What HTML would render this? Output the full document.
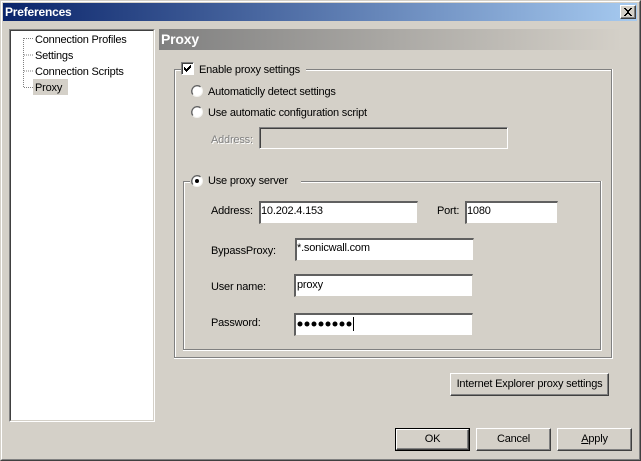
<!DOCTYPE html>
<html><head><meta charset="utf-8"><style>
html,body{margin:0;padding:0;background:#d4d0c8}
#w{position:relative;width:641px;height:461px;overflow:hidden;background:#d4d0c8;font-family:"Liberation Sans",sans-serif;font-size:11px;letter-spacing:-.2px;color:#000}
#w div{position:absolute;box-sizing:border-box}
.t{white-space:nowrap;line-height:14px;height:14px;margin-top:1px}
.b{background:#d4d0c8;border-top:1px solid #fff;border-left:1px solid #fff;border-right:1px solid #404040;border-bottom:1px solid #404040;box-shadow:inset -1px -1px 0 #808080;text-align:center;white-space:nowrap}
.d{background:#808080}.h{background:#fff}
.f{background:#fff;border-top:2px solid #606060;border-left:2px solid #606060;border-right:1px solid #d4d0c8;border-bottom:1px solid #d4d0c8}
</style></head><body><div id="w">
<div style="left:0;top:0;width:641px;height:461px;border-top:1px solid #d4d0c8;border-left:1px solid #d4d0c8;border-right:1px solid #404040;border-bottom:1px solid #404040"></div>
<div style="left:1px;top:1px;width:639px;height:459px;border-top:1px solid #fff;border-left:1px solid #fff;border-right:1px solid #808080;border-bottom:1px solid #808080"></div>
<div style="left:3px;top:3px;width:634px;height:18px;background:linear-gradient(90deg,#0a246a,#a6caf0)"></div>
<div class="t" style="left:5px;top:5px;margin:0;color:#fff;font-weight:bold;font-size:12px;letter-spacing:-.2px">Preferences</div>
<div class="b" style="left:620px;top:5px;width:16px;height:14px"></div>
<svg style="position:absolute;left:620px;top:5px" width="16" height="14"><path d="M4 3h2v1h1v1h2v-1h1v-1h2v1h-1v1h-1v1h-1v2h1v1h1v1h1v1h-2v-1h-1v-1h-2v1h-1v1h-2v-1h1v-1h1v-1h1v-2h-1v-1h-1v-1h-1z" fill="#000"/></svg>

<!-- tree -->
<div style="left:9px;top:29px;width:146px;height:393px;background:#fff;border-top:1px solid #808080;border-left:1px solid #808080;border-right:1px solid #fff;border-bottom:1px solid #fff"></div>
<div style="left:10px;top:30px;width:144px;height:391px;background:#fff;border-top:1px solid #404040;border-left:1px solid #404040;border-right:1px solid #d4d0c8;border-bottom:1px solid #d4d0c8"></div>
<svg style="position:absolute;left:20px;top:35px" width="16" height="56"><path d="M3.5 3V53M4 3.5H14M4 20H14M4 36H14M4 52.5H14" stroke="#808080" stroke-dasharray="1 1" fill="none"/></svg>
<div style="left:33px;top:79px;width:35px;height:16px;background:#d4d0c8"></div>
<div class="t" style="left:35px;top:32px">Connection Profiles</div>
<div class="t" style="left:35px;top:48px">Settings</div>
<div class="t" style="left:35px;top:64px">Connection Scripts</div>
<div class="t" style="left:35px;top:80px">Proxy</div>

<!-- header -->
<div style="left:159px;top:29px;width:478px;height:21px;background:linear-gradient(90deg,#808080,#d4d0c8 97%)"></div>
<div class="t" style="left:161px;top:32px;margin:0;color:#fff;font-weight:bold;font-size:14px;letter-spacing:-.2px">Proxy</div>

<!-- outer group -->
<div class="d" style="left:174px;top:69px;width:438px;height:1px"></div>
<div class="h" style="left:175px;top:70px;width:437px;height:1px"></div>
<div class="d" style="left:174px;top:69px;width:1px;height:289px"></div>
<div class="h" style="left:175px;top:70px;width:1px;height:287px"></div>
<div class="d" style="left:611px;top:69px;width:1px;height:289px"></div>
<div class="h" style="left:612px;top:69px;width:1px;height:290px"></div>
<div class="d" style="left:174px;top:357px;width:438px;height:1px"></div>
<div class="h" style="left:174px;top:358px;width:439px;height:1px"></div>
<div style="left:181px;top:62px;width:125px;height:14px;background:#d4d0c8"></div>
<div style="left:181px;top:62px;width:13px;height:13px;background:#fff;border-top:1px solid #808080;border-left:1px solid #808080;border-bottom:1px solid #fff;border-right:1px solid #fff;box-shadow:inset 1px 1px 0 #404040"></div>
<svg style="position:absolute;left:181px;top:62px" width="13" height="13"><path d="M3 5h1v1h1v1h1v-1h1v-1h1v-1h1v-1h1v3h-1v1h-1v1h-1v1h-1v1h-1v-1h-1v-1h-1z" fill="#000"/></svg>
<div class="t" style="left:199px;top:62px">Enable proxy settings</div>

<svg style="position:absolute;left:190px;top:84px" width="14" height="14"><circle cx="7" cy="7" r="5.5" fill="#fff" stroke="#f4f3ef"/><path d="M2.8 10.5A5.5 5.5 0 0 1 10.5 2.8" fill="none" stroke="#606060" stroke-width="1.4"/></svg>
<div class="t" style="left:208px;top:84px">Automaticlly detect settings</div>
<svg style="position:absolute;left:190px;top:105px" width="14" height="14"><circle cx="7" cy="7" r="5.5" fill="#fff" stroke="#f4f3ef"/><path d="M2.8 10.5A5.5 5.5 0 0 1 10.5 2.8" fill="none" stroke="#606060" stroke-width="1.4"/></svg>
<div class="t" style="left:208px;top:105px">Use automatic configuration script</div>
<div class="t" style="left:211px;top:132px;color:#808080;text-shadow:1px 1px 0 #fff">Address:</div>
<div style="left:259px;top:127px;width:249px;height:22px;background:#d4d0c8;border-top:1px solid #808080;border-left:1px solid #808080;border-right:1px solid #fff;border-bottom:1px solid #fff;box-shadow:inset 1px 1px 0 #404040"></div>

<!-- inner group -->
<div class="d" style="left:183px;top:181px;width:418px;height:1px"></div>
<div class="h" style="left:184px;top:182px;width:417px;height:1px"></div>
<div class="d" style="left:183px;top:181px;width:1px;height:169px"></div>
<div class="h" style="left:184px;top:182px;width:1px;height:167px"></div>
<div class="d" style="left:600px;top:181px;width:1px;height:169px"></div>
<div class="h" style="left:601px;top:181px;width:1px;height:170px"></div>
<div class="d" style="left:183px;top:349px;width:418px;height:1px"></div>
<div class="h" style="left:183px;top:350px;width:419px;height:1px"></div>
<div style="left:190px;top:174px;width:111px;height:14px;background:#d4d0c8"></div>
<svg style="position:absolute;left:190px;top:174px" width="14" height="14"><circle cx="7" cy="7" r="5.5" fill="#fff" stroke="#f4f3ef"/><path d="M2.8 10.5A5.5 5.5 0 0 1 10.5 2.8" fill="none" stroke="#606060" stroke-width="1.4"/><circle cx="7" cy="7" r="2" fill="#000"/></svg>
<div class="t" style="left:208px;top:173px">Use proxy server</div>

<div class="t" style="left:211px;top:203px">Address:</div>
<div class="t" style="left:437px;top:203px">Port:</div>
<div class="t" style="left:211px;top:243px">BypassProxy:</div>
<div class="t" style="left:211px;top:279px">User name:</div>
<div class="t" style="left:211px;top:315px">Password:</div>

<div class="f" style="left:259px;top:201px;width:159px;height:23px"></div>
<div class="f" style="left:465px;top:201px;width:93px;height:23px"></div>
<div class="f" style="left:295px;top:238px;width:179px;height:23px"></div>
<div class="f" style="left:294px;top:274px;width:179px;height:23px"></div>
<div class="f" style="left:294px;top:313px;width:179px;height:23px"></div>
<div class="t" style="left:261px;top:203px">10.202.4.153</div>
<div class="t" style="left:467px;top:203px">1080</div>
<div class="t" style="left:297px;top:240px">*.sonicwall.com</div>
<div class="t" style="left:297px;top:277px">proxy</div>
<svg style="position:absolute;left:296px;top:320px" width="60" height="10"><g fill="#000"><circle cx="4" cy="4" r="2.5"/><circle cx="11" cy="4" r="2.5"/><circle cx="18" cy="4" r="2.5"/><circle cx="25" cy="4" r="2.5"/><circle cx="32" cy="4" r="2.5"/><circle cx="39" cy="4" r="2.5"/><circle cx="46" cy="4" r="2.5"/><circle cx="53" cy="4" r="2.5"/></g></svg>
<div style="left:353px;top:317px;width:1px;height:14px;background:#000"></div>

<!-- buttons -->
<div class="b" style="left:450px;top:373px;width:159px;height:23px;line-height:21px">Internet Explorer proxy settings</div>
<div style="left:395px;top:428px;width:75px;height:23px;background:#000"></div>
<div class="b" style="left:396px;top:429px;width:73px;height:21px;line-height:19px">OK</div>
<div class="b" style="left:476px;top:428px;width:75px;height:23px;line-height:21px">Cancel</div>
<div class="b" style="left:557px;top:428px;width:75px;height:23px;line-height:21px"><u>A</u>pply</div>
</div></body></html>
